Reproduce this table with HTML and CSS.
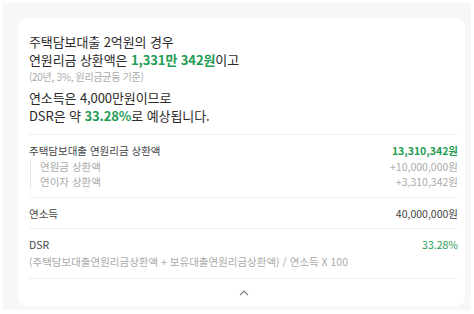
FILE: index.html
```html
<!DOCTYPE html>
<html lang="ko">
<head>
<meta charset="utf-8">
<link rel="stylesheet" href="styles.css">
</head>
<body>
<div class="frame">
  <div class="card">
    <div class="summary">
      <p class="line">주택담보대출 2억원의 경우</p>
      <p class="line">연원리금 상환액은 <b class="green">1,331만 342원</b>이고</p>
      <p class="note">(20년, 3%, 원리금균등 기준)</p>
      <p class="line gap">연소득은 4,000만원이므로</p>
      <p class="line">DSR은 약 <b class="green">33.28%</b>로 예상됩니다.</p>
    </div>
    <div class="section">
      <div class="row">
        <span class="label">주택담보대출 연원리금 상환액</span>
        <span class="value strong">13,310,342원</span>
      </div>
      <div class="subs">
        <div class="row sub">
          <span>연원금 상환액</span>
          <span>+10,000,000원</span>
        </div>
        <div class="row sub">
          <span>연이자 상환액</span>
          <span>+3,310,342원</span>
        </div>
      </div>
    </div>
    <div class="section">
      <div class="row">
        <span class="label">연소득</span>
        <span class="value">40,000,000원</span>
      </div>
    </div>
    <div class="section">
      <div class="row">
        <span class="label">DSR</span>
        <span class="value pct">33.28%</span>
      </div>
      <div class="formula">(주택담보대출연원리금상환액 + 보유대출연원리금상환액) / 연소득 X 100</div>
    </div>
    <div class="toggle">
      <svg width="10" height="6" viewBox="0 0 10 6"><path d="M1 5.2 L5 1.2 L9 5.2" fill="none" stroke="#777" stroke-width="1.2"/></svg>
    </div>
  </div>
</div>
</body>
</html>
```

FILE: styles.css
```css
* { box-sizing: border-box; }
html, body { margin: 0; padding: 0; background: #fff; }
body {
  font-family: "Noto Sans CJK KR", "Noto Sans", sans-serif;
  color: #333;
  padding: 3px;
}
.frame {
  background: #f7f7f8;
  width: 468px;
  height: 307px;
  padding: 15px 6px 4px 15px;
}
.card {
  background: #fff;
  border-radius: 9px;
  height: 100%;
  padding: 15px 7px 0 11px;
}
.summary { padding-bottom: 9px; }
.line {
  margin: 0;
  font-size: 13px;
  line-height: 18px;
  letter-spacing: -0.1px;
  color: #2a2a2a;
}
.line.gap { margin-top: 4px; }
.note {
  margin: 0;
  font-size: 10px;
  line-height: 16px;
  color: #aaa;
  letter-spacing: -0.3px;
}
.green { color: #1f9d55; }
b.green { font-weight: 700; }
.section {
  border-top: 1px solid #f0f0f0;
  padding: 8px 0 8px;
}
.section + .section + .section { padding-bottom: 8px; }
.section:nth-of-type(3) { padding-bottom: 7px; }
.row {
  display: flex;
  justify-content: space-between;
  font-size: 10.5px;
  line-height: 15px;
}
.label { color: #444; }
.value { color: #444; }
.value.strong { font-weight: 700; color: #1f9d55; }
.value.pct { color: #1f9d55; }
.subs {
  margin-top: 1px;
  border-left: 1.5px solid #e6e6e6;
  padding-left: 9px;
  margin-left: 1px;
}
.sub { color: #aaa; }
.formula {
  font-size: 10.5px;
  line-height: 16px;
  color: #aaa;
  margin-top: 2px;
}
.toggle {
  border-top: 1px solid #f0f0f0;
  height: 28px;
  display: flex;
  align-items: center;
  justify-content: center;
}
```
